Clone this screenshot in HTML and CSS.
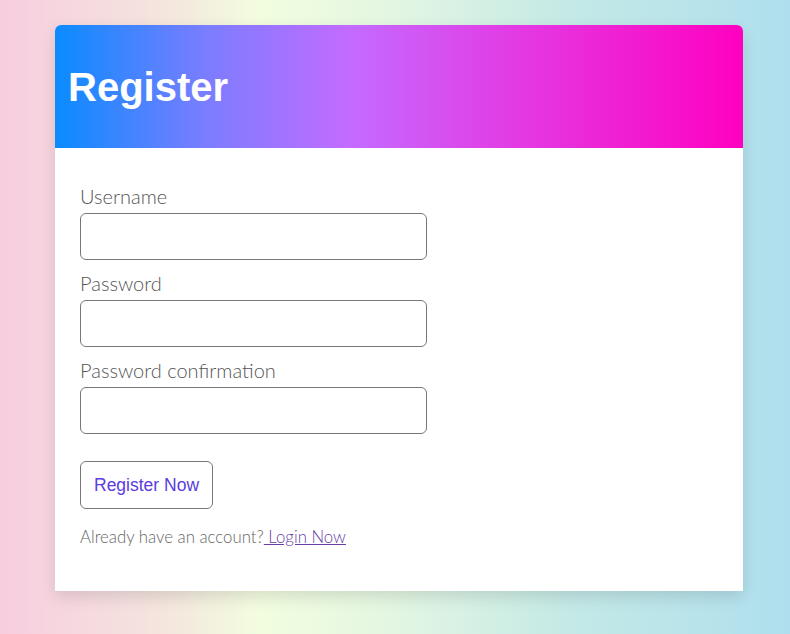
FILE: index.html
```html
<!DOCTYPE html>
<html lang="en">
<head>
<meta charset="utf-8">
<title>Register</title>
<link rel="stylesheet" href="styles.css">
</head>
<body>
<div class="card">
  <div class="card-header">
    <h1 class="title">Register</h1>
  </div>
  <form class="card-body">
    <div class="field">
      <label class="label" for="username">Username</label>
      <input class="input" id="username" type="text">
    </div>
    <div class="field">
      <label class="label" for="password">Password</label>
      <input class="input" id="password" type="password">
    </div>
    <div class="field">
      <label class="label" for="confirm">Password confirmation</label>
      <input class="input" id="confirm" type="password">
    </div>
    <button class="btn" type="button">Register Now</button>
    <p class="note">Already have an account?<a class="link" href="#"> Login Now</a></p>
  </form>
</div>
</body>
</html>
```

FILE: styles.css
```css
html, body {
  margin: 0;
  height: 100%;
}
body {
  background: linear-gradient(90deg, #f8cddf 0%, #f4e4de 20%, #f2fddf 33%, #e3f6e2 50%, #c4e9e6 72%, #afdfee 100%);
  padding: 25px 0 0 55px;
  box-sizing: border-box;
  font-family: "Lato", sans-serif;
}
.card {
  width: 688px;
  background: #fff;
  border-radius: 6px 6px 0 0;
  box-shadow: 0 6px 16px rgba(0, 0, 0, 0.12);
  overflow: hidden;
}
.card-header {
  height: 123px;
  display: flex;
  align-items: center;
  padding: 0 13px;
  background: linear-gradient(90deg, #0a8bff 0%, #7b7dff 22%, #c46bff 43%, #e13ee6 65%, #ff00c0 100%);
}
.title {
  margin: 2px 0 0;
  font-family: "Liberation Sans", Arial, sans-serif;
  font-weight: bold;
  font-size: 40px;
  color: #fff;
}
.card-body {
  padding: 41px 25px 43px;
  margin: 0;
}
.field {
  margin-bottom: 16px;
}
.label {
  display: block;
  font-size: 20px;
  font-weight: 300;
  line-height: 15px;
  padding-bottom: 9px;
  color: #555;
}
.input {
  display: block;
  box-sizing: border-box;
  width: 347px;
  height: 47px;
  border: 1px solid #777;
  border-radius: 6px;
  background: #fff;
  font-size: 16px;
  padding: 0 10px;
}
.btn {
  display: block;
  margin-top: 27px;
  box-sizing: border-box;
  height: 48px;
  padding: 0 13px;
  background: #fff;
  border: 1px solid #777;
  border-radius: 6px;
  font-family: "Liberation Sans", Arial, sans-serif;
  font-size: 17.5px;
  color: #5a3ce0;
}
.note {
  margin: 17px 0 0;
  font-size: 16.8px;
  line-height: 22px;
  font-weight: 300;
  color: #666;
}
.link {
  color: #6b3fa8;
  text-decoration: underline;
}
```
